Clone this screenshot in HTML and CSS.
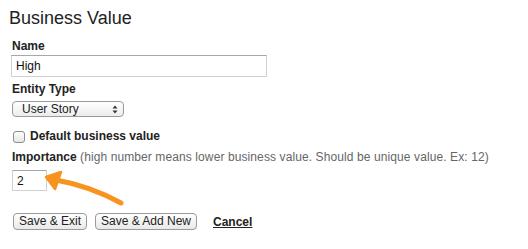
FILE: index.html
```html
<!DOCTYPE html>
<html>
<head>
<meta charset="utf-8">
<link rel="stylesheet" href="styles.css">
</head>
<body>
<div class="page">
  <h1 class="title">Business Value</h1>
  <form class="form">
    <label class="field-label" for="name">Name</label>
    <input class="text-input name-input" id="name" type="text" value="High">

    <label class="field-label entity-label" for="entity">Entity Type</label>
    <div class="select-wrap">
      <select class="select" id="entity"><option>User Story</option></select>
      <svg class="select-arrows" width="6" height="9" viewBox="0 0 6 9"><path d="M3 0.5 L5.5 3.5 H0.5 Z M3 8.5 L5.5 5.5 H0.5 Z" fill="#333"/></svg>
    </div>

    <div class="check-row">
      <input class="checkbox" type="checkbox" id="def">
      <label class="check-label" for="def">Default business value</label>
    </div>

    <div class="importance-label"><b>Importance</b> <span class="hint">(high number means lower business value. Should be unique value. Ex: 12)</span></div>
    <input class="text-input small-input" type="text" value="2">

    <div class="actions">
      <button type="button" class="btn btn-exit">Save &amp; Exit</button>
      <button type="button" class="btn btn-new">Save &amp; Add New</button>
      <a class="cancel" href="#">Cancel</a>
    </div>
  </form>
  <svg class="arrow" width="528" height="249" viewBox="0 0 528 249">
    <path d="M121 203 Q 90 186 56 180" fill="none" stroke="#f7931e" stroke-width="5" stroke-linecap="round"/>
    <path d="M46 177 L61 172 L55 189 Z" fill="#f7931e" stroke="#f7931e" stroke-width="2.5" stroke-linejoin="round"/>
  </svg>
</div>
</body>
</html>
```
FILE: styles.css
```css
html, body {
  margin: 0;
  padding: 0;
  background: #fff;
}
body {
  font-family: "Liberation Sans", Arial, sans-serif;
  font-size: 12px;
  color: #222;
}
.page {
  position: relative;
  width: 528px;
  height: 249px;
}
.title {
  margin: 0;
  padding: 7px 0 0 9px;
  font-size: 18px;
  line-height: 22px;
  font-weight: normal;
  color: #222;
}
.form {
  display: flex;
  flex-direction: column;
  align-items: flex-start;
  padding-left: 11px;
}
.field-label {
  font-weight: bold;
  font-size: 12px;
  line-height: 15px;
  margin-top: 10px;
  margin-left: 1px;
}
.entity-label {
  margin-top: 5px;
}
.text-input {
  box-sizing: border-box;
  height: 22px;
  margin: 1px 0 0 0;
  border: 1px solid #d0d0d0;
  border-top-color: #a8a8a8;
  font-family: "Liberation Sans", Arial, sans-serif;
  font-size: 12px;
  padding: 0 4px;
  color: #111;
  outline: none;
}
.name-input {
  width: 256px;
}
.select-wrap {
  position: relative;
  margin: 4px 0 0 1px;
}
.select {
  appearance: none;
  -webkit-appearance: none;
  box-sizing: border-box;
  width: 112px;
  height: 16px;
  border: 1px solid #9a9a9a;
  border-radius: 4px;
  background: linear-gradient(#ffffff, #ececec);
  font-family: "Liberation Sans", Arial, sans-serif;
  font-size: 12px;
  line-height: 14px;
  padding: 0 0 0 9px;
  color: #222;
  display: block;
}
.select-arrows {
  position: absolute;
  right: 6px;
  top: 4px;
}
.check-row {
  display: flex;
  align-items: center;
  margin-top: 12px;
  margin-left: 2px;
}
.checkbox {
  appearance: none;
  -webkit-appearance: none;
  box-sizing: border-box;
  width: 12px;
  height: 12px;
  margin: 0;
  border: 1px solid #8c8c8c;
  border-radius: 3px;
  background: linear-gradient(#fdfdfd, #e6e6e6);
}
.check-label {
  font-weight: bold;
  margin-left: 5px;
  line-height: 15px;
}
.importance-label {
  margin-top: 6px;
  margin-left: 1px;
  line-height: 15px;
}
.hint {
  color: #666;
  letter-spacing: 0.1px;
}
.small-input {
  width: 35px;
  height: 21px;
  margin-top: 5px;
  margin-left: 1px;
}
.actions {
  display: flex;
  align-items: center;
  margin-top: 22px;
  margin-left: 2px;
}
.btn {
  box-sizing: border-box;
  height: 17px;
  border: 1px solid #9a9a9a;
  border-radius: 4px;
  background: linear-gradient(#ffffff, #e9e9e9);
  font-family: "Liberation Sans", Arial, sans-serif;
  font-size: 12px;
  color: #222;
  padding: 0;
  line-height: 15px;
}
.btn-exit {
  width: 74px;
}
.btn-new {
  width: 102px;
  margin-left: 8px;
}
.cancel {
  margin-left: 16px;
  font-weight: bold;
  color: #222;
  text-decoration: underline;
}
.arrow {
  position: absolute;
  left: 0;
  top: 0;
  pointer-events: none;
}
```
